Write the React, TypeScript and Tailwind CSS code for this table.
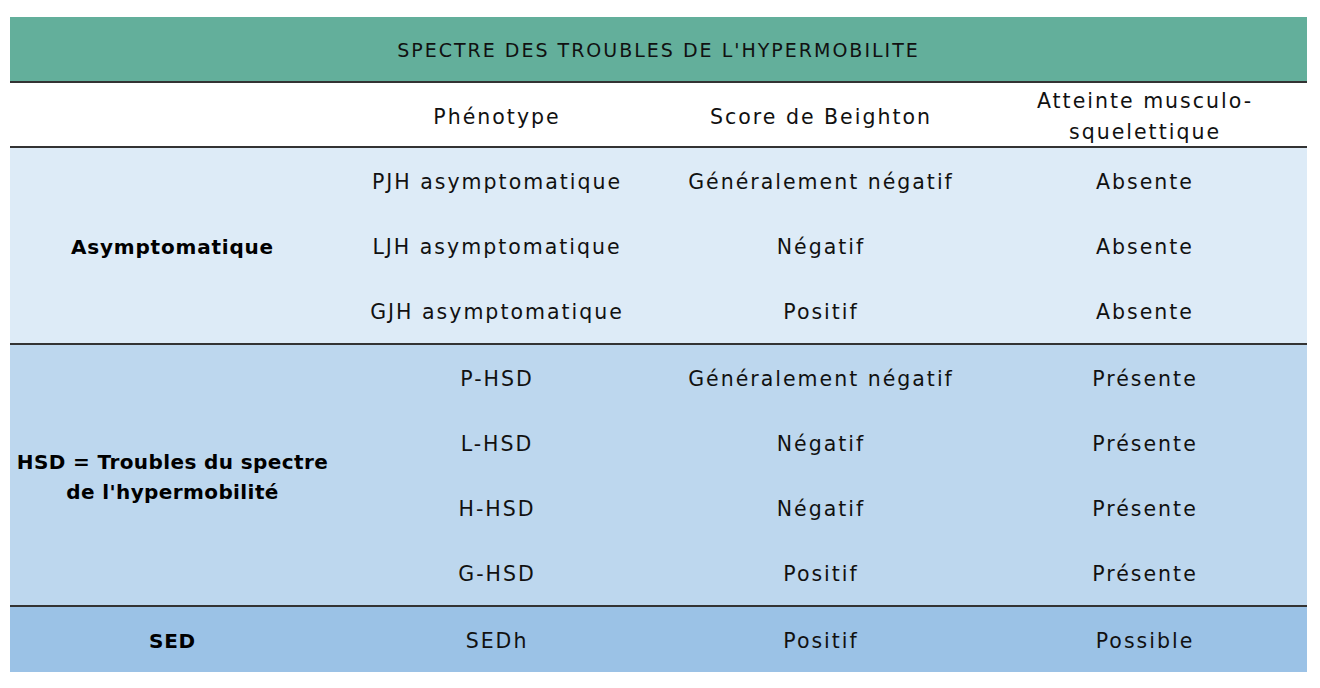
import React from "react";

const font = { fontFamily: '"DejaVu Sans", sans-serif' };

type Row = [string, string, string];

function Section({ label, rows, bg, labelLines, labelSpacing }: { label?: string; labelLines?: string[]; rows: Row[]; bg: string; labelSpacing: string }) {
  return (
    <div className={`flex ${bg}`}>
      <div className={`w-[325px] shrink-0 flex flex-col items-center justify-center font-bold text-[20px] leading-[30px] text-black text-center pt-[3px] ${labelSpacing}`}>
        {labelLines ? labelLines.map((l) => <div key={l}>{l}</div>) : label}
      </div>
      <div className="flex-1 flex flex-col">
        {rows.map((r, i) => (
          <div key={i} className="grid grid-cols-3 h-[65px] items-center text-center text-[20.5px] tracking-[2px] text-[#111] pt-[3px]">
            <div>{r[0]}</div>
            <div>{r[1]}</div>
            <div>{r[2]}</div>
          </div>
        ))}
      </div>
    </div>
  );
}

export default function App() {
  return (
    <div className="w-[1320px] h-[688px] bg-white pt-[17px] pl-[10px]" style={font}>
      <div className="w-[1297px]">
        <div className="h-[64px] bg-[#63af9b] flex items-center justify-center text-[19px] tracking-[2px] text-[#111] pt-[2px]">
          SPECTRE DES TROUBLES DE L'HYPERMOBILITE
        </div>
        <div className="h-[2px] bg-[#333]" />
        <div className="flex h-[63px] bg-white text-[20.5px] tracking-[2px] text-[#111] text-center pt-[3px]">
          <div className="w-[325px] shrink-0" />
          <div className="flex-1 grid grid-cols-3 items-center">
            <div>Phénotype</div>
            <div>Score de Beighton</div>
            <div className="leading-[31px]">
              <div>Atteinte musculo-</div>
              <div>squelettique</div>
            </div>
          </div>
        </div>
        <div className="h-[2px] bg-[#333]" />
        <Section
          bg="bg-[#ddebf7]"
          label="Asymptomatique"
          labelSpacing="tracking-[0.8px]"
          rows={[
            ["PJH asymptomatique", "Généralement négatif", "Absente"],
            ["LJH asymptomatique", "Négatif", "Absente"],
            ["GJH asymptomatique", "Positif", "Absente"],
          ]}
        />
        <div className="h-[2px] bg-[#333]" />
        <Section
          bg="bg-[#bdd7ee]"
          labelLines={["HSD = Troubles du spectre", "de l'hypermobilité"]}
          labelSpacing="tracking-[0.4px]"
          rows={[
            ["P-HSD", "Généralement négatif", "Présente"],
            ["L-HSD", "Négatif", "Présente"],
            ["H-HSD", "Négatif", "Présente"],
            ["G-HSD", "Positif", "Présente"],
          ]}
        />
        <div className="h-[2px] bg-[#333]" />
        <Section bg="bg-[#9bc2e6]" label="SED" labelSpacing="tracking-[0.8px]" rows={[["SEDh", "Positif", "Possible"]]} />
      </div>
    </div>
  );
}
